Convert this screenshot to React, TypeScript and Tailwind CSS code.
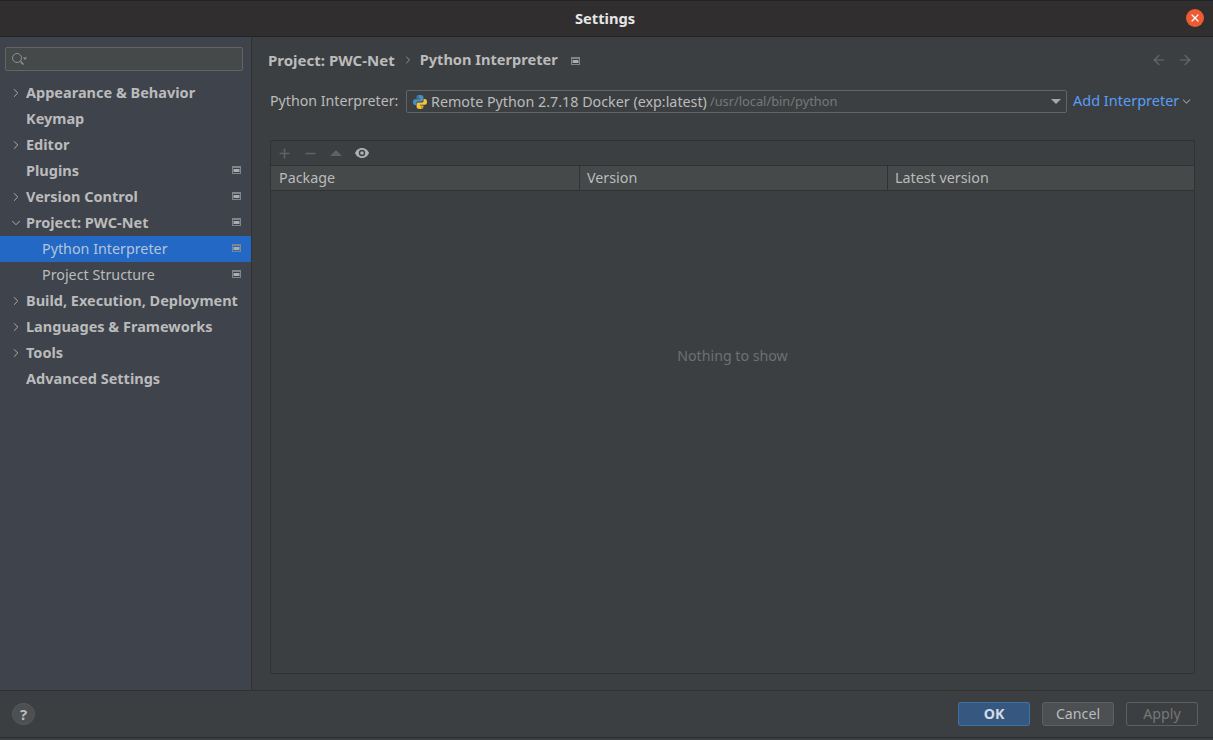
import React from "react"
import { ChevronRight, ChevronDown, Plus, Minus, ArrowLeft, ArrowRight, X } from "lucide-react"

const font = { fontFamily: '"Noto Sans", sans-serif' }

type NavItem = { label: string; arrow?: "right" | "down"; scope?: boolean; child?: boolean; selected?: boolean }

const items: NavItem[] = [
    { label: "Appearance & Behavior", arrow: "right" },
    { label: "Keymap" },
    { label: "Editor", arrow: "right" },
    { label: "Plugins", scope: true },
    { label: "Version Control", arrow: "right", scope: true },
    { label: "Project: PWC-Net", arrow: "down", scope: true },
    { label: "Python Interpreter", child: true, selected: true, scope: true },
    { label: "Project Structure", child: true, scope: true },
    { label: "Build, Execution, Deployment", arrow: "right" },
    { label: "Languages & Frameworks", arrow: "right" },
    { label: "Tools", arrow: "right" },
    { label: "Advanced Settings" },
]

function ScopeIcon() {
    return (
        <svg width="9" height="8" viewBox="0 0 9 8" className="shrink-0">
            <rect x="0.5" y="0.5" width="8" height="7" fill="none" stroke="#80858a" />
            <rect x="1" y="1" width="7" height="1" fill="#80858a" />
            <rect x="1.500" y="3" width="6" height="3" fill="#a9adb0" />
        </svg>
    )
}

function PythonIcon() {
    return (
        <svg width="16" height="16" viewBox="0 0 16 16" className="shrink-0">
            <path d="M8 1C5.600 1 4.600 1.800 4.600 3v1.600H8v.6H3C1.600 5.200 1 6.400 1 8s.6 3 2 3h1.400V9.300c0-1.100.9-1.900 2-1.900h3.200c1 0 1.800-.8 1.800-1.800V3c0-1.200-1.200-2-3.400-2z" fill="#4a8fc4" />
            <circle cx="6" cy="2.900" r=".7" fill="#3c3f41" />
            <path d="M8 15c2.400 0 3.400-.8 3.400-2v-1.600H8v-.6h5c1.400 0 2-1.200 2-2.800s-.6-3-2-3h-1.400v1.700c0 1.100-.9 1.900-2 1.900H6.400c-1 0-1.800.8-1.800 1.800V13c0 1.200 1.200 2 3.400 2z" fill="#f2c33d" />
            <circle cx="10" cy="13.100" r=".7" fill="#3c3f41" />
        </svg>
    )
}

function SidebarRow({ item }: { item: NavItem }) {
    return (
        <div className={`flex h-[26px] items-center pr-[10px] ${item.selected ? "bg-[#2268c4]" : ""}`}>
            <div className="flex w-[26px] shrink-0 justify-center pl-[5px]">
                {item.arrow === "right" && <ChevronRight size={14} strokeWidth={1.600} className="text-[#afb1b3]" />}
                {item.arrow === "down" && <ChevronDown size={14} strokeWidth={1.600} className="text-[#afb1b3]" />}
            </div>
            <span className={`mb-[1px] flex-1 truncate ${item.child ? "pl-[16px] text-[14.300px]" : "text-[14.500px] font-bold"} ${item.selected ? "text-[#b4c4dc]" : "text-[#bbbbbb]"}`}>
                {item.label}
            </span>
            {item.scope && <span className="mb-[2px]"><ScopeIcon /></span>}
        </div>
    )
}

export default function App() {
    return (
        <div style={font} className="flex h-[740px] w-full flex-col overflow-hidden bg-[#3c3f41] text-[#bbbbbb]">
            <div className="relative flex h-[37px] shrink-0 items-center justify-center border-y border-y-[#232323] bg-[#302e2e] pr-[3px]">
                <span className="text-[14.700px] font-bold text-[#e6e6e6]">Settings</span>
                <div className="absolute right-[9px] top-[8px] flex h-[18px] w-[18px] items-center justify-center rounded-full bg-[#ee5a32]">
                    <X size={12} strokeWidth={2.500} className="text-white" />
                </div>
            </div>

            <div className="flex min-h-0 flex-1">
                <div className="flex w-[252px] shrink-0 flex-col border-r border-[#323232] bg-[#3e434c]">
                    <div className="mx-[5px] mt-[10px] flex h-[24px] w-[238px] items-center gap-[1px] rounded-[2px] border border-[#646464] bg-[#45494a] pl-[5px]">
                        <svg width="18" height="14" viewBox="0 0 18 14" fill="none" stroke="#8f9294" strokeWidth="1">
                            <circle cx="6" cy="6" r="4.500" />
                            <path d="M9.500 9.500l3 3" strokeWidth="1.500" />
                            <path d="M12 5.500h4l-2 2.500z" fill="#8f9294" stroke="none" />
                        </svg>
                    </div>
                    <div className="mt-[9px]">
                        {items.map((item) => (
                            <SidebarRow key={item.label} item={item} />
                        ))}
                    </div>
                </div>

                <div className="flex min-w-0 flex-1 flex-col pl-[18px] pr-[18px]">
                    <div className="-ml-[2px] mt-[11px] flex h-[24px] items-center font-bold">
                        <span className="whitespace-nowrap text-[15px]">Project: PWC-Net</span>
                        <ChevronRight size={12} strokeWidth={1.600} className="ml-[7px] mr-[6px] text-[#a5a8aa]" />
                        <span className="whitespace-nowrap text-[14.600px]">Python Interpreter</span>
                        <span className="ml-[13px] mt-[2px]"><ScopeIcon /></span>
                        <div className="ml-auto flex gap-[10px] pr-[2px] text-[#696b6d]">
                            <ArrowLeft size={16} strokeWidth={1.700} />
                            <ArrowRight size={16} strokeWidth={1.700} />
                        </div>
                    </div>

                    <div className="mt-[18px] flex h-[23px] items-center">
                        <span className="mb-[2px] w-[136px] shrink-0 text-[14.200px]">Python Interpreter:</span>
                        <div className="flex h-[23px] w-[661px] shrink-0 items-center rounded-[2px] border border-[#646464] pl-[5px] pr-[5px]">
                            <PythonIcon />
                            <span className="ml-[3px] whitespace-nowrap text-[14.300px]">Remote Python 2.7.18 Docker (exp:latest)</span>
                            <span className="ml-[3px] whitespace-nowrap text-[12.800px] text-[#787878]">/usr/local/bin/python</span>
                            <div className="ml-auto h-0 w-0 border-x-[5px] border-t-[5px] border-x-transparent border-t-[#a5a8aa]" />
                        </div>
                        <span className="mb-[2px] ml-[6px] whitespace-nowrap text-[14.500px] text-[#589df6]">Add Interpreter</span>
                        <ChevronDown size={13} strokeWidth={2} className="ml-[1px] shrink-0 text-[#8f9294]" />
                    </div>

                    <div className="mt-[27px] flex h-[534px] w-[925px] flex-col border border-[#323232]">
                        <div className="flex h-[25px] shrink-0 items-center border-b border-[#323232] pl-[6px]">
                            <Plus size={15} strokeWidth={2.400} className="text-[#5f6163]" />
                            <Minus size={15} strokeWidth={2.400} className="ml-[11px] text-[#5f6163]" />
                            <div className="ml-[12px] h-0 w-0 border-x-[6px] border-b-[6px] border-x-transparent border-b-[#5f6163]" />
                            <svg width="16" height="16" viewBox="0 0 16 16" className="ml-[12px]">
                                <path d="M8 3C4.500 3 2 5.500 1 8c1 2.500 3.500 5 7 5s6-2.500 7-5c-1-2.500-3.500-5-7-5z" fill="#afb1b3" />
                                <circle cx="8" cy="8" r="3.200" fill="#3c3f41" />
                                <circle cx="8" cy="8" r="1.800" fill="#afb1b3" />
                            </svg>
                        </div>
                        <div className="grid h-[25px] shrink-0 grid-cols-[309px_308px_1fr] border-b border-[#323232] bg-[#45494a] text-[14.300px]">
                            <div className="flex items-center border-r border-[#323232] pl-[8px]">Package</div>
                            <div className="flex items-center border-r border-[#323232] pl-[7px]">Version</div>
                            <div className="flex items-center pl-[7px]">Latest version</div>
                        </div>
                        <div className="flex flex-1 items-center justify-center pb-[153px] text-[14.200px] text-[#6e7071]">
                            Nothing to show
                        </div>
                    </div>
                </div>
            </div>

            <div className="flex h-[47px] shrink-0 items-center border-t border-[#323232] pl-[12px] pr-[15px]">
                <div className="flex h-[22px] w-[23px] items-center justify-center rounded-full border border-[#55585a] bg-[#4c5052] text-[15px] font-bold">?</div>
                <div className="ml-auto flex gap-[12px] text-[14.200px]">
                    <div className="flex h-[24px] w-[72px] items-center justify-center rounded-[3px] border border-[#4c87c8]/50 bg-[#365880] font-bold text-[#d3dbe3]">OK</div>
                    <div className="flex h-[24px] w-[72px] items-center justify-center rounded-[3px] border border-[#5e6060] bg-[#4c5052]">Cancel</div>
                    <div className="flex h-[24px] w-[72px] items-center justify-center rounded-[3px] border border-[#5e6060] text-[#777777]">Apply</div>
                </div>
            </div>
            <div className="h-[3px] shrink-0 border-t border-[#2b2b2b] bg-[#3c3f41]" />
        </div>
    )
}
